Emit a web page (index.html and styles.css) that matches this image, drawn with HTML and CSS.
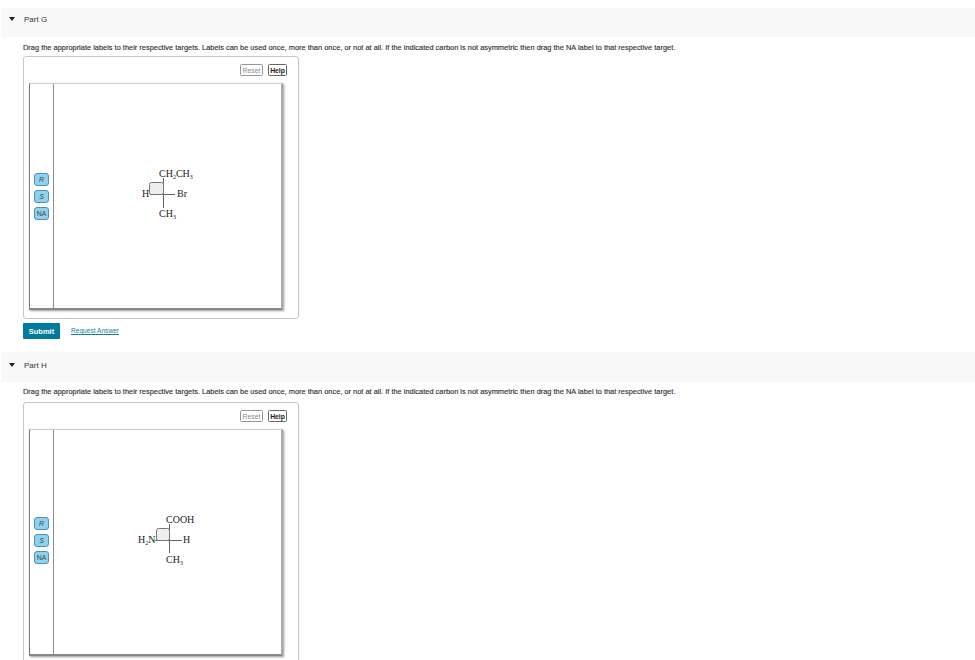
FILE: index.html
```html
<!DOCTYPE html>
<html lang="en">
<head>
<meta charset="utf-8">
<title>Parts G and H</title>
<link rel="stylesheet" href="styles.css">
</head>
<body>
<section class="part part-g">
  <header class="part-head"><span class="caret"></span><span class="part-title">Part G</span></header>
  <div class="part-body">
    <p class="prompt">Drag the appropriate labels to their respective targets. Labels can be used once, more than once, or not at all. If the indicated carbon is not asymmetric then drag the NA label to that respective target.</p>
    <div class="panel">
      <div class="tools"><button class="btn btn-reset">Reset</button><button class="btn btn-help">Help</button></div>
      <div class="canvas">
        <div class="labels">
          <span class="chip chip-i">R</span>
          <span class="chip chip-i">S</span>
          <span class="chip">NA</span>
        </div>
        <div class="stage">
          <div class="mol mol-g">
            <svg class="bonds" width="70" height="60" viewBox="0 0 70 60"><path d="M33.5 13V43M20 29.5H45"/></svg>
            <span class="target"></span>
            <span class="atom a-top">CH<sub>2</sub>CH<sub>3</sub></span>
            <span class="atom a-left">H</span>
            <span class="atom a-right">Br</span>
            <span class="atom a-bot">CH<sub>3</sub></span>
          </div>
        </div>
      </div>
    </div>
    <div class="actions"><button class="submit">Submit</button><a class="link" href="#">Request Answer</a></div>
  </div>
</section>
<section class="part part-h">
  <header class="part-head"><span class="caret"></span><span class="part-title">Part H</span></header>
  <div class="part-body">
    <p class="prompt">Drag the appropriate labels to their respective targets. Labels can be used once, more than once, or not at all. If the indicated carbon is not asymmetric then drag the NA label to that respective target.</p>
    <div class="panel">
      <div class="tools"><button class="btn btn-reset">Reset</button><button class="btn btn-help">Help</button></div>
      <div class="canvas">
        <div class="labels">
          <span class="chip chip-i">R</span>
          <span class="chip chip-i">S</span>
          <span class="chip">NA</span>
        </div>
        <div class="stage">
          <div class="mol mol-h">
            <svg class="bonds" width="70" height="60" viewBox="0 0 70 60"><path d="M39.5 13V42M25 29.5H52"/></svg>
            <span class="target"></span>
            <span class="atom a-top">COOH</span>
            <span class="atom a-left">H<sub>2</sub>N</span>
            <span class="atom a-right">H</span>
            <span class="atom a-bot">CH<sub>3</sub></span>
          </div>
        </div>
      </div>
    </div>
  </div>
</section>
</body>
</html>
```
FILE: styles.css
```css
* { box-sizing: border-box; }
html, body { margin: 0; padding: 0; }
body {
  width: 975px;
  height: 660px;
  overflow: hidden;
  background: #fff;
  font-family: "Liberation Sans", Arial, sans-serif;
  color: #333;
}
.part { padding-left: 1px; }
.part-g { padding-top: 8px; }
.part-h { padding-top: 13px; }
.part-head {
  height: 30px;
  background: #f8f8f8;
  display: flex;
  align-items: center;
  padding-left: 8px;
  padding-bottom: 4px;
}
.part-g .part-head { height: 29px; padding-bottom: 6px; }
.caret {
  width: 0;
  height: 0;
  border-left: 3.5px solid transparent;
  border-right: 3.5px solid transparent;
  border-top: 4px solid #222;
  margin-right: 8px;
  margin-top: -1px;
}
.part-title { font-size: 8px; color: #333; margin-left: 1px; }
.part-body { padding-left: 22px; }
.prompt {
  margin: 6px 0 0;
  font-size: 7.43px;
  line-height: 9px;
  color: #333;
  white-space: nowrap;
  -webkit-text-stroke: 0.15px #333;
}
.part-h .prompt { margin-top: 5px; }
.panel {
  margin-top: 4px;
  width: 276px;
  height: 263px;
  border: 1px solid #c6c6c6;
  border-radius: 3px;
  padding: 7px 5px 0;
}
.part-h .panel { margin-top: 6px; }
.tools {
  display: flex;
  justify-content: flex-end;
  gap: 5px;
  height: 12px;
  padding-right: 6px;
}
.btn {
  height: 12px;
  padding: 0;
  font: 6.8px "Liberation Sans", Arial, sans-serif;
  background: #fff;
  border-radius: 1.5px;
  line-height: 9px;
}
.btn-reset { width: 23px; border: 1px solid #8d9ba0; color: #8a8a8a; }
.btn-help { width: 19px; border: 1px solid #666; color: #222; font-weight: bold; }
.canvas {
  margin-top: 7px;
  width: 254px;
  height: 227px;
  display: flex;
  border-top: 1px solid #ccc;
  border-left: 1px solid #777;
  border-bottom: 2px solid #888;
  border-right: 2px solid #aaa;
  box-shadow: 1px 1px 2px #999;
  background: #fff;
}
.labels {
  width: 24px;
  border-right: 1px solid #8c8c8c;
  display: flex;
  flex-direction: column;
  align-items: center;
  gap: 4px;
  padding-top: 89px;
}
.part-h .labels { padding-top: 87px; }
.chip {
  width: 15px;
  height: 13px;
  background: #8fd2ee;
  border: 1px solid #4d93b8;
  border-radius: 3px;
  font-size: 7px;
  line-height: 11px;
  text-align: center;
  color: #444;
}
.chip-i { font-style: italic; }
.stage { flex: 1; position: relative; }
.mol { position: absolute; left: 76px; top: 81px; width: 70px; height: 60px; font-family: "Liberation Serif", "Times New Roman", serif; font-size: 10px; color: #222; }
.bonds { position: absolute; left: 0; top: 0; fill: none; stroke: #666; stroke-width: 1; }
.target {
  position: absolute;
  height: 13px;
  background: #eee;
  border: 1px solid #777;
  border-radius: 2.5px;
}
.mol-g .target { left: 19px; top: 17px; width: 15px; }
.mol-h .target { left: 26px; top: 17px; width: 14px; }
.atom { position: absolute; line-height: 11px; white-space: nowrap; }
.atom sub { font-size: 6px; line-height: 0; vertical-align: -2px; }
.mol-g .a-top { left: 29px; top: 3px; }
.mol-g .a-left { left: 12px; top: 23px; }
.mol-g .a-right { left: 47px; top: 23px; }
.mol-g .a-bot { left: 29px; top: 43px; }
.mol-h .a-top { left: 36px; top: 3px; }
.mol-h .a-left { left: 8px; top: 23px; }
.mol-h .a-right { left: 53px; top: 23px; }
.mol-h .a-bot { left: 36px; top: 43px; }
.actions {
  display: flex;
  align-items: center;
  gap: 11px;
  margin-top: 4px;
}
.submit {
  width: 37px;
  height: 16px;
  padding: 0;
  background: #007b9e;
  border: 0;
  border-radius: 1px;
  color: #fff;
  font: bold 7.5px "Liberation Sans", Arial, sans-serif;
}
.link { font-size: 6.6px; color: #1a7f9f; margin-top: -1px; }
```
